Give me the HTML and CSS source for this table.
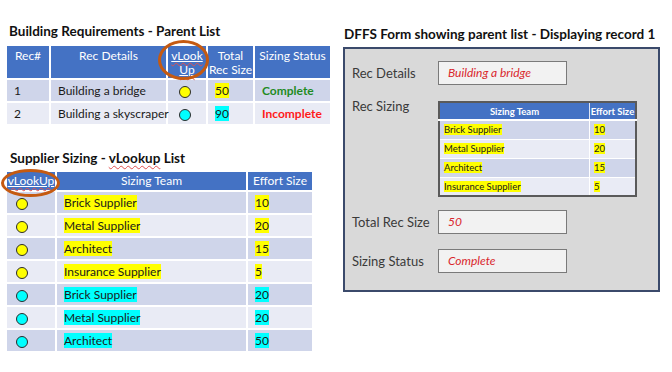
FILE: index.html
```html
<!DOCTYPE html>
<html>
<head>
<meta charset="utf-8">
<link rel="stylesheet" href="styles.css">
</head>
<body>
<div class="page">
  <div class="left">
    <h2 class="title t-parent">Building Requirements - Parent List</h2>
    <table class="grid parent">
      <colgroup><col class="c-rec"><col class="c-det"><col class="c-lk"><col class="c-tot"><col class="c-stat"></colgroup>
      <thead>
        <tr>
          <th>Rec#</th>
          <th>Rec Details</th>
          <th class="lk-head"><span class="squig"><span class="link">vLook</span></span><br><span class="squig"><span class="link">Up</span></span><span class="ring ring1"></span></th>
          <th class="tot">Total<br>Rec Size</th>
          <th>Sizing Status</th>
        </tr>
      </thead>
      <tbody>
        <tr class="dark"><td class="num">1</td><td>Building a bridge</td><td class="ctr"><span class="dot y"></span></td><td><span class="hl-y">50</span></td><td class="ok">Complete</td></tr>
        <tr class="light"><td class="num">2</td><td>Building a skyscraper</td><td class="ctr"><span class="dot c"></span></td><td><span class="hl-c">90</span></td><td class="bad">Incomplete</td></tr>
      </tbody>
    </table>

    <h2 class="title t-sup">Supplier Sizing - <span class="squig-only">vLookup</span> List</h2>
    <table class="grid supplier">
      <colgroup><col class="s-lk"><col class="s-team"><col class="s-eff"></colgroup>
      <thead>
        <tr>
          <th class="lk2"><span class="squig sq2"><span class="link">vLookUp</span></span><span class="ring ring2"></span></th>
          <th>Sizing Team</th>
          <th>Effort Size</th>
        </tr>
      </thead>
      <tbody>
        <tr class="dark"><td class="dc"><span class="dot y"></span></td><td><span class="hl-y">Brick Supplier</span></td><td><span class="hl-y">10</span></td></tr>
        <tr class="light"><td class="dc"><span class="dot y"></span></td><td><span class="hl-y">Metal Supplier</span></td><td><span class="hl-y">20</span></td></tr>
        <tr class="dark"><td class="dc"><span class="dot y"></span></td><td><span class="hl-y">Architect</span></td><td><span class="hl-y">15</span></td></tr>
        <tr class="light"><td class="dc"><span class="dot y"></span></td><td><span class="hl-y">Insurance Supplier</span></td><td><span class="hl-y">5</span></td></tr>
        <tr class="dark"><td class="dc"><span class="dot c"></span></td><td><span class="hl-c">Brick Supplier</span></td><td><span class="hl-c">20</span></td></tr>
        <tr class="light"><td class="dc"><span class="dot c"></span></td><td><span class="hl-c">Metal Supplier</span></td><td><span class="hl-c">20</span></td></tr>
        <tr class="dark"><td class="dc"><span class="dot c"></span></td><td><span class="hl-c">Architect</span></td><td><span class="hl-c">50</span></td></tr>
      </tbody>
    </table>
  </div>

  <div class="right">
    <h2 class="title t-form">DFFS Form showing parent list - Displaying record 1</h2>
    <div class="panel">
      <div class="frow r1">
        <div class="lbl">Rec Details</div>
        <div class="box">Building a bridge</div>
      </div>
      <div class="frow r2">
        <div class="lbl lbl-top">Rec Sizing</div>
        <table class="mini">
          <colgroup><col class="m-team"><col class="m-eff"></colgroup>
          <thead><tr><th>Sizing Team</th><th>Effort Size</th></tr></thead>
          <tbody>
            <tr class="dark"><td><span class="hl-y">Brick Supplier</span></td><td><span class="hl-y">10</span></td></tr>
            <tr class="light"><td><span class="hl-y">Metal Supplier</span></td><td><span class="hl-y">20</span></td></tr>
            <tr class="dark"><td><span class="hl-y">Architect</span></td><td><span class="hl-y">15</span></td></tr>
            <tr class="light"><td><span class="hl-y">Insurance Supplier</span></td><td><span class="hl-y">5</span></td></tr>
          </tbody>
        </table>
      </div>
      <div class="frow r3">
        <div class="lbl">Total Rec Size</div>
        <div class="box">50</div>
      </div>
      <div class="frow r4">
        <div class="lbl">Sizing Status</div>
        <div class="box">Complete</div>
      </div>
    </div>
  </div>
</div>
</body>
</html>
```
FILE: styles.css
```css
* { box-sizing: border-box; }
html, body { margin: 0; padding: 0; background: #ffffff; }
body {
  font-family: Lato, "Open Sans", "Liberation Sans", sans-serif;
  color: #1a1a1a;
  width: 672px;
  height: 372px;
  overflow: hidden;
}
.page {
  display: flex;
  align-items: flex-start;
}
.left {
  width: 336px;
  padding-left: 5px;
}
.right {
  padding-left: 7px;
}
.title {
  margin: 0;
  font-size: 13.5px;
  font-weight: 700;
  color: #111;
  line-height: 16px;
  white-space: nowrap;
}
.t-parent { margin: 23px 0 5px 4px; }
.t-sup { margin: 24px 0 4px 5px; }
.t-form { margin: 26px 0 5px 1px; font-size: 13.5px; }

.grid {
  border-collapse: separate;
  border-spacing: 2px;
  table-layout: fixed;
  font-size: 12px;
}
.grid th {
  background: #4472c4;
  color: #ffffff;
  font-weight: 400;
  text-align: center;
  vertical-align: top;
  padding: 3px 0 0;
  line-height: 14px;
  white-space: nowrap;
}
.grid td {
  padding: 0 0 0 7px;
  vertical-align: middle;
  white-space: nowrap;
}
.dark td { background: #cfd5ea; }
.light td { background: #e9ebf5; }

.parent { width: 325px; }
.parent thead tr { height: 32px; }
.parent tbody tr { height: 21px; }
.c-rec { width: 42px; }
.c-det { width: 115px; }
.c-lk { width: 38px; }
.c-tot { width: 45px; }
.c-stat { width: 75px; }
.parent td.num { padding-left: 7px; }
.parent td.ctr { padding-left: 11px; }
.ok { color: #1f8b1f; font-weight: 700; }
.bad { color: #ff1a1a; font-weight: 700; }

.lk-head, .lk2 { position: relative; }
.squig {
  text-decoration: underline wavy #e05050;
  text-decoration-thickness: 1px;
  text-underline-offset: 2px;
}
.link {
  text-decoration: underline;
  text-decoration-color: #ffffff;
  text-underline-offset: 1px;
}
.squig-only {
  text-decoration: underline wavy #e05050;
  text-decoration-thickness: 1px;
  text-underline-offset: 2px;
}
.ring {
  position: absolute;
  border: 3px solid #c55a11;
  border-radius: 50%;
  pointer-events: none;
}
.ring1 { left: -10px; top: -6px; width: 51px; height: 40px; }
.ring2 { left: -6px; top: -3px; width: 59px; height: 28px; }

.supplier { width: 309px; }
.supplier thead tr { height: 18px; }
.supplier th { padding-top: 2px; }
.supplier tbody tr { height: 21px; }
.s-lk { width: 48px; }
.s-team { width: 189px; }
.s-eff { width: 64px; }
.supplier td.dc { padding-left: 9px; }
.supplier td { padding-left: 7px; }

.dot {
  display: inline-block;
  width: 12px;
  height: 12px;
  border-radius: 50%;
  border: 1px solid #2b2b2b;
  vertical-align: middle;
}
.dot.y { background: #ffff00; }
.dot.c { background: #00ffff; }
.hl-y { background: #ffff00; }
.hl-c { background: #00ffff; }

.panel {
  width: 317px;
  height: 245px;
  background: #d9d9d9;
  border: 2px solid #3b4a6b;
  padding: 12px 0 0 7px;
}
.frow {
  display: flex;
  align-items: center;
}
.r2 { margin-top: 16px; align-items: flex-start; }
.r3 { margin-top: 13px; }
.r4 { margin-top: 15px; }
.lbl {
  width: 86px;
  font-size: 13px;
  color: #3a3a3a;
}
.lbl-top { margin-top: -3px; }
.box {
  width: 129px;
  height: 24px;
  background: #f2f2f2;
  border: 1.5px solid #7a7a7a;
  color: #d9262c;
  font-style: italic;
  font-size: 12px;
  line-height: 21px;
  padding-left: 9px;
}
.mini {
  border: 2px solid #5a5a5a;
  border-collapse: collapse;
  table-layout: fixed;
  width: 199px;
  font-size: 9.5px;
  background: #fff;
}
.m-team { width: 149px; }
.m-eff { width: 46px; }
.mini th {
  background: #4472c4;
  color: #fff;
  font-weight: 700;
  height: 18px;
  padding: 0;
  border-right: 1px solid #dfe5f2;
  border-bottom: 2px solid #fff;
}
.mini th:last-child { border-right: none; }
.mini td {
  height: 19px;
  padding: 0 0 0 4px;
  border-right: 1px solid #fff;
  border-top: 1px solid #fff;
}
.mini td:last-child { border-right: none; }
```
